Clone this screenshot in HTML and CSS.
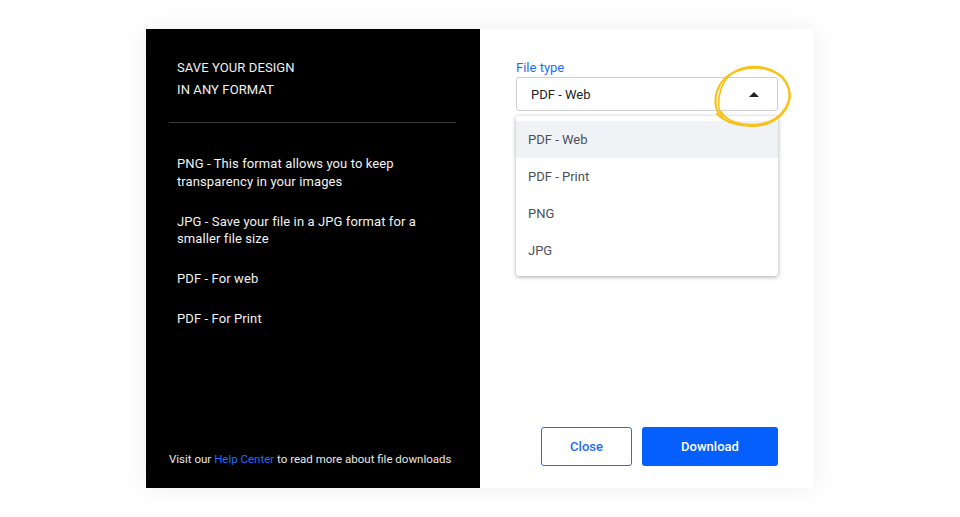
FILE: index.html
```html
<!DOCTYPE html>
<html lang="en">
<head>
  <meta charset="UTF-8">
  <title>Download design</title>
  <link rel="stylesheet" href="styles.css">
</head>
<body>
  <div class="modal">
    <div class="info-panel">
      <h2 class="info-title">SAVE YOUR DESIGN<br>IN ANY FORMAT</h2>
      <hr class="divider">
      <ul class="format-list">
        <li>PNG - This format allows you to keep transparency in your images</li>
        <li>JPG - Save your file in a JPG format for a smaller file size</li>
        <li>PDF - For web</li>
        <li>PDF - For Print</li>
      </ul>
      <p class="help-text">Visit our <a href="#">Help Center</a> to read more about file downloads</p>
    </div>

    <div class="form-panel">
      <label class="field-label">File type</label>
      <div class="select-wrap">
        <div class="select-box">
          <span>PDF - Web</span>
          <span class="caret"></span>
        </div>
        <svg class="highlight" width="80" height="66" viewBox="0 0 80 66">
          <path d="M6 50 C-2 36 4 14 24 7 C42 0 66 4 74 20 C82 36 70 56 48 60 C30 63 14 58 8 48"
                fill="none" stroke="#f7c21b" stroke-width="2.2" stroke-linecap="round"/>
          <path d="M10 54 C0 38 8 10 30 4 C50 -1 72 8 76 26 C80 44 64 61 42 62 C26 63 12 58 4 50"
                fill="none" stroke="#f7c21b" stroke-width="1.8" stroke-linecap="round"/>
        </svg>
        <ul class="options">
          <li class="active">PDF - Web</li>
          <li>PDF - Print</li>
          <li>PNG</li>
          <li>JPG</li>
        </ul>
      </div>

      <div class="actions">
        <button class="btn btn-outline">Close</button>
        <button class="btn btn-primary">Download</button>
      </div>
    </div>
  </div>
</body>
</html>
```

FILE: styles.css
```css
body {
  margin: 0;
  height: 100vh;
  display: flex;
  align-items: center;
  justify-content: center;
  background: #fff;
  font-family: Roboto, "Liberation Sans", sans-serif;
}

.modal {
  display: flex;
  width: 668px;
  height: 459px;
  box-shadow: 0 0 24px rgba(0, 0, 0, 0.07);
}

.info-panel {
  width: 334px;
  box-sizing: border-box;
  background: #000;
  color: #f2f2f2;
  padding: 28px 24px 21px 23px;
  display: flex;
  flex-direction: column;
}

.info-title {
  margin: 0;
  padding-left: 8px;
  font-size: 13px;
  font-weight: 400;
  line-height: 22px;
  letter-spacing: 0.1px;
}

.divider {
  border: none;
  border-top: 1px solid #3a3a3a;
  margin: 21px 0 0;
}

.format-list {
  list-style: none;
  margin: 32px 0 0;
  padding: 0 0 0 8px;
  font-size: 13px;
  line-height: 17.5px;
  letter-spacing: 0.1px;
}

.format-list li {
  margin-bottom: 22.5px;
  padding-right: 20px;
}

.help-text {
  margin: auto 0 0;
  font-size: 11.5px;
  line-height: 16px;
  color: #e8e8e8;
  white-space: nowrap;
}

.help-text a {
  color: #1f6bff;
  text-decoration: none;
}

.form-panel {
  flex: 1;
  background: #fff;
  padding: 31px 36px 22px;
  display: flex;
  flex-direction: column;
}

.field-label {
  font-size: 13px;
  line-height: 16px;
  color: #1f6bff;
  margin-bottom: 1px;
}

.select-wrap {
  position: relative;
}

.select-box {
  height: 34px;
  box-sizing: border-box;
  border: 1px solid #cfcfcf;
  border-radius: 3px;
  display: flex;
  align-items: center;
  justify-content: space-between;
  padding: 0 18px 0 14px;
  font-size: 13px;
  color: #222;
}

.caret {
  width: 0;
  height: 0;
  border-left: 5px solid transparent;
  border-right: 5px solid transparent;
  border-bottom: 5px solid #222;
}

.highlight {
  position: absolute;
  left: 197px;
  top: -13px;
  pointer-events: none;
  z-index: 2;
}

.options {
  position: absolute;
  top: 39px;
  left: 0;
  right: 0;
  list-style: none;
  margin: 0;
  padding: 5px 0 7px;
  background: #fff;
  border-radius: 3px;
  box-shadow: 0 1px 4px rgba(0, 0, 0, 0.35);
  z-index: 1;
}

.options li {
  height: 37px;
  line-height: 37px;
  padding-left: 12px;
  font-size: 13px;
  color: #4b505c;
}

.options li.active {
  background: #f1f2f6;
}

.actions {
  margin-top: auto;
  display: flex;
  justify-content: flex-end;
  gap: 10px;
}

.btn {
  height: 39px;
  border-radius: 3px;
  font-family: Roboto, "Liberation Sans", sans-serif;
  font-size: 13px;
  font-weight: 500;
  cursor: pointer;
}

.btn-outline {
  width: 91px;
  background: #fff;
  color: #1f6bff;
  border: 1px solid #1f6bff;
}

.btn-primary {
  width: 136px;
  background: #055ffd;
  color: #fff;
  border: none;
}
```
